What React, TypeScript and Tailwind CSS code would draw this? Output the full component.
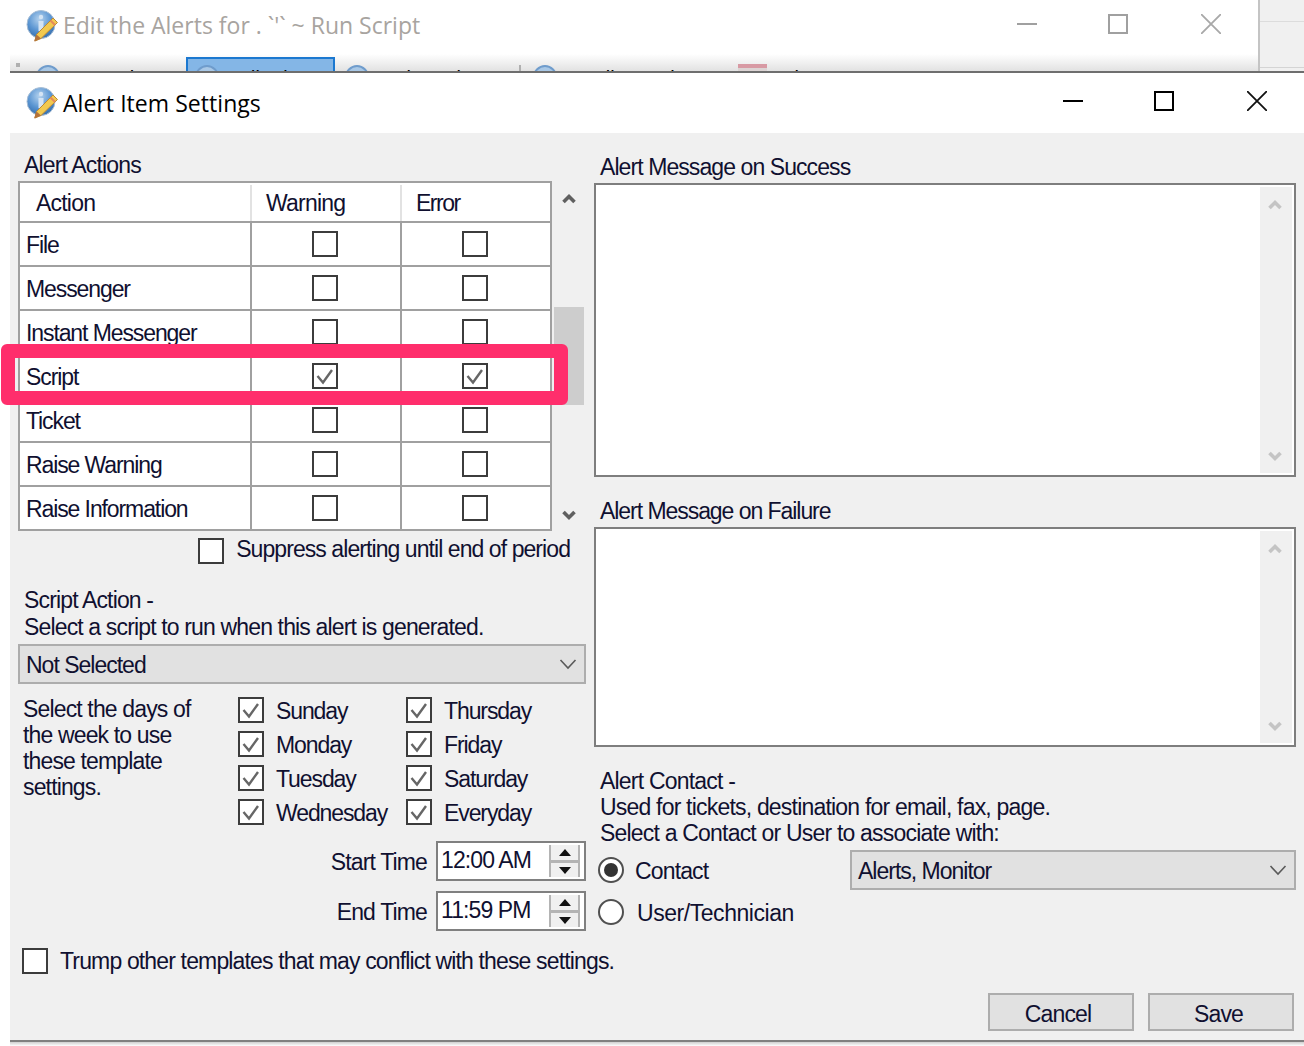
const font = 'font-["Liberation_Sans",Arial,sans-serif]';

function AppIcon() {
  return (
    <svg width="32" height="32" viewBox="0 0 32 32" className="shrink-0">
      <defs>
        <radialGradient id="orb" cx="45%" cy="30%" r="75%">
          <stop offset="0" stopColor="#b4d2ee" />
          <stop offset="0.55" stopColor="#5a95d2" />
          <stop offset="1" stopColor="#2f68a8" />
        </radialGradient>
      </defs>
      <circle cx="15" cy="14.500" r="14" fill="url(#orb)" stroke="#a9bfd6" />
      <circle cx="15" cy="7" r="2.200" fill="#d4e4f4" />
      <path d="M12.500 11h5v10h-5z" fill="#d4e4f4" />
      <path d="M27 8l4.500 4.500L15 28.500l-6 2.500 1.500-6.500z" fill="#f2c94f" stroke="#b9893a" strokeWidth="1" />
      <path d="M10.500 24.500l4.500 4-7 3z" fill="#b5723a" />
      <path d="M24.500 10.500l4.500 4.500" stroke="#e58a5c" strokeWidth="2" />
    </svg>
  );
}

function Chevron({ down = false, light = false }: { down?: boolean; light?: boolean }) {
  return (
    <svg width="14" height="12" viewBox="0 0 14 12" className={light ? 'text-[#c4c4c4]' : 'text-[#606060]'}>
      <path d={down ? 'M1.500 3L7 8.500 12.500 3' : 'M1.500 9L7 3.500 12.500 9'} fill="none" stroke="currentColor" strokeWidth="3.600" />
    </svg>
  );
}

function Check({ checked = false }: { checked?: boolean }) {
  return (
    <span className="flex h-[26px] w-[26px] shrink-0 items-center justify-center border-2 border-[#3c3c3c] bg-white">
      {checked && (
        <svg width="20" height="20" viewBox="0 0 20 20">
          <path d="M2.500 10l5.500 6.500L17 4" fill="none" stroke="#666666" strokeWidth="2.400" />
        </svg>
      )}
    </span>
  );
}

const rows = [
  { name: 'File', h: 'h-[44px]' },
  { name: 'Messenger', h: 'h-[44px]' },
  { name: 'Instant Messenger', h: 'h-[44px]' },
  { name: 'Script', h: 'h-[44px]', checked: true },
  { name: 'Ticket', h: 'h-[44px]' },
  { name: 'Raise Warning', h: 'h-[44px]' },
  { name: 'Raise Information', h: 'h-[42px]' },
];

function ActionsTable() {
  return (
    <div className="relative flex h-[350px] w-[568px]">
      <div className="w-[534px] border-2 border-[#a0a0a0] bg-white text-[23px] tracking-[-1.1px] text-[#101030]">
        <div className="flex h-[40px] border-b-2 border-[#a0a0a0] pt-[2px] tracking-[-0.8px]">
          <div className="flex w-[232px] items-center border-r-2 border-[#e2e2e2] pl-[16px]">Action</div>
          <div className="flex w-[150px] items-center border-r-2 border-[#e2e2e2] pl-[14px]">Warning</div>
          <div className="flex flex-1 items-center pl-[14px] tracking-[-1.5px]">Error</div>
        </div>
        {rows.map((r, i) => (
          <div key={r.name} className={`flex ${r.h} ${i < rows.length - 1 ? 'border-b-2 border-[#a0a0a0]' : ''}`}>
            <div className="flex w-[232px] items-center border-r-2 border-[#a0a0a0] pl-[6px] pt-[2px]">{r.name}</div>
            <div className="flex w-[150px] items-center justify-center border-r-2 border-[#a0a0a0] pr-[2px]">
              <Check checked={r.checked} />
            </div>
            <div className="flex flex-1 items-center justify-center pr-[2px]">
              <Check checked={r.checked} />
            </div>
          </div>
        ))}
      </div>
      <div className="ml-[2px] flex w-[30px] flex-col items-center pb-[10px] pt-[12px]">
        <Chevron />
        <div className="mt-[102px] h-[98px] w-full bg-[#cdcdcd]" />
        <div className="mt-auto flex">
          <Chevron down />
        </div>
      </div>
      <div className="absolute left-[-17px] top-[163px] h-[61px] w-[567px] rounded-[6px] border-[14px] border-[#ff2e6c]" />
    </div>
  );
}

function Spinner() {
  return (
    <div className="flex h-[32px] w-[31px] flex-col items-center justify-center border-x-2 border-[#b4b4b4] bg-[#f0f0f0]">
      <svg width="14" height="9" viewBox="0 0 14 9"><path d="M7 1l6 7H1z" fill="#111" /></svg>
      <div className="my-[3px] h-[3px] w-full bg-[#b4b4b4]" />
      <svg width="14" height="9" viewBox="0 0 14 9"><path d="M7 8L1 1h12z" fill="#111" /></svg>
    </div>
  );
}

function TimeRow({ label, value }: { label: string; value: string }) {
  return (
    <div className="flex h-[40px] items-center justify-end">
      <span className="mr-[9px] pt-[3px]">{label}</span>
      <div className="flex h-[40px] w-[150px] items-center justify-between border-2 border-[#808080] bg-white pl-[3px] pr-[4px]">
        <span className="pb-[2px] tracking-[-0.9px]">{value}</span>
        <Spinner />
      </div>
    </div>
  );
}

function Dropdown({ value, w }: { value: string; w: string }) {
  return (
    <div className={`flex h-[40px] ${w} items-center justify-between border-2 border-[#adadad] bg-[#e1e1e1] pl-[6px] pr-[7px]`}>
      <span className="pt-[2px] tracking-[-1px]">{value}</span>
      <svg width="18" height="12" viewBox="0 0 18 12"><path d="M1.500 2l7.500 8 7.500-8" fill="none" stroke="#5a5a5a" strokeWidth="1.600" /></svg>
    </div>
  );
}

function MessageBox({ h }: { h: string }) {
  return (
    <div className={`flex ${h} justify-end border-2 border-[#7e7e7e] bg-white pb-[2px] pr-[2px] pt-[2px]`}>
      <div className="flex w-[32px] flex-col items-center justify-between bg-[#f0f0f0] pb-[11px] pr-[2px] pt-[12px]">
        <Chevron light />
        <Chevron down light />
      </div>
    </div>
  );
}

function Radio({ on = false }: { on?: boolean }) {
  return (
    <span className="flex h-[26px] w-[26px] items-center justify-center rounded-full border-2 border-[#505050] bg-white">
      {on && <span className="h-[14px] w-[14px] rounded-full bg-[#333333]" />}
    </span>
  );
}

const days = [
  ['Sunday', 'Thursday'],
  ['Monday', 'Friday'],
  ['Tuesday', 'Saturday'],
  ['Wednesday', 'Everyday'],
];

function ToolbarItem({ label, cls, active = false }: { label: string; cls: string; active?: boolean }) {
  return (
    <div className={`flex ${cls} h-[40px] shrink-0 items-start gap-[12px] ${active ? 'mt-[3px] border-x-2 border-t-2 border-[#1b78d0] bg-[#84b6e6] pt-[6px]' : 'pt-[11px]'}`}>
      <span className="h-[24px] w-[24px] shrink-0 rounded-full border-2 border-[#6f9ccc] bg-[#a9c8e6]" />
      <span className="mt-[2px] text-[20px] leading-[23px] text-black">{label}</span>
    </div>
  );
}

export default function App() {
  return (
    <div className={`flex h-[1046px] w-[1304px] flex-col overflow-hidden bg-white ${font}`}>
      {/* window behind the dialog */}
      <div className="flex h-[71px] shrink-0">
        <div className="w-[1258px] shrink-0 pl-[10px]">
          <div className="flex h-[54px] items-center bg-white pb-[3px] pl-[16px]">
            <AppIcon />
            <span className="ml-[5px] font-['Open_Sans',sans-serif] text-[23px] text-[#a8a4a0]">
              Edit the Alerts for . `'` ~ Run Script
            </span>
            <div className="ml-auto flex items-center pb-[3px] pr-[37px]">
              <div className="h-[2px] w-[20px] bg-[#a0a0a0]" />
              <div className="ml-[71px] h-[20px] w-[20px] border-2 border-[#a0a0a0]" />
              <svg className="ml-[73px]" width="20" height="20" viewBox="0 0 20 20"><path d="M0 0l20 20M20 0L0 20" stroke="#a8a8a8" strokeWidth="1.800" /></svg>
            </div>
          </div>
          <div className="flex h-[17px] overflow-hidden bg-gradient-to-b from-white to-[#e2e2e2]">
            <div className="ml-[6px] mt-[9px] h-[4px] w-[4px] shrink-0 bg-[#b0b0b0]" />
            <div className="ml-[10px] flex">
              <ToolbarItem label="New Alert" cls="w-[156px] pl-[6px]" />
              <ToolbarItem label="Edit Alert" cls="w-[149px] pl-[7px]" active />
              <ToolbarItem label="Delete Alert" cls="w-[184px] pl-[10px]" />
              <div className="mt-[11px] h-full w-[2px] shrink-0 bg-[#b0b0b0]" />
              <ToolbarItem label="Duplicate Alert" cls="w-[217px] pl-[12px]" />
              <div className="mt-[10px] h-[20px] w-[29px] shrink-0 border-t-4 border-[#d89aa4] bg-[#dcd4d4]" />
              <span className="ml-[13px] mt-[13px] text-[20px] leading-[23px] text-black">Close</span>
            </div>
          </div>
        </div>
        <div className="flex-1 border-l-2 border-[#c4c4c4] bg-[#f0f0f0]">
          <div className="mt-[21px] h-[1px] bg-[#dcdcdc]" />
          <div className="mt-[45px] h-[1px] bg-[#d4d4d4]" />
        </div>
      </div>

      {/* dialog */}
      <div className="ml-[10px] flex h-[975px] shrink-0 flex-col border-t-2 border-[#6e6e6e]">
        <div className="flex h-[60px] shrink-0 items-center bg-white pl-[16px]">
          <AppIcon />
          <span className="ml-[5px] font-['Open_Sans',sans-serif] text-[23px] tracking-[0.05px] text-black">Alert Item Settings</span>
          <div className="ml-auto mb-[4px] flex items-center pr-[37px]">
            <div className="h-[2px] w-[20px] bg-black" />
            <div className="ml-[71px] h-[20px] w-[20px] border-2 border-black" />
            <svg className="ml-[73px]" width="20" height="20" viewBox="0 0 20 20"><path d="M0 0l20 20M20 0L0 20" stroke="#111" strokeWidth="1.800" /></svg>
          </div>
        </div>

        <div className="flex h-[909px] shrink-0 flex-col border-b-2 border-[#808080] bg-[#f0f0f0] pl-[8px] pr-[8px] text-[23px] tracking-[-0.85px] text-[#101030]">
          <div className="flex h-[798px] shrink-0 gap-[8px]">
            {/* left column */}
            <div className="w-[568px] shrink-0">
              <div className="flex h-[48px] items-end pb-[3px] pl-[6px] leading-[26px]">Alert Actions</div>
              <ActionsTable />
              <div className="flex h-[40px] items-center justify-end pr-[16px]">
                <Check />
                <span className="ml-[12px] pb-[3px] tracking-[-0.93px]">Suppress alerting until end of period</span>
              </div>
              <div className="pl-[6px] pt-[16px] leading-[27px]">
                <div>Script Action -</div>
                <div>Select a script to run when this alert is generated.</div>
              </div>
              <div className="mt-[3px]">
                <Dropdown value="Not Selected" w="w-[568px]" />
              </div>
              <div className="mt-[13px] flex">
                <div className="-mt-[1px] w-[220px] pl-[5px] leading-[26px]">
                  Select the days of<br />the week to use<br />these template<br />settings.
                </div>
                <div className="grid grid-cols-[168px_auto] gap-y-[8px] tracking-[-1.1px]">
                  {days.flat().map(d => (
                    <div key={d} className="flex h-[26px] items-center gap-[12px]">
                      <Check checked />
                      <span className="pt-[2px]">{d}</span>
                    </div>
                  ))}
                </div>
              </div>
              <div className="mt-[16px] flex flex-col gap-[10px]">
                <TimeRow label="Start Time" value="12:00 AM" />
                <TimeRow label="End Time" value="11:59 PM" />
              </div>
            </div>

            {/* right column */}
            <div className="flex-1">
              <div className="flex h-[50px] items-end pb-[3px] pl-[6px] leading-[26px] tracking-[-0.92px]">Alert Message on Success</div>
              <MessageBox h="h-[294px]" />
              <div className="flex h-[50px] items-end pb-[3px] pl-[6px] leading-[26px] tracking-[-1.05px]">Alert Message on Failure</div>
              <MessageBox h="h-[220px]" />
              <div className="pl-[6px] pt-[21px] leading-[26px] tracking-[-0.8px]">
                <div>Alert Contact -</div>
                <div>Used for tickets, destination for email, fax, page.</div>
                <div>Select a Contact or User to associate with:</div>
              </div>
              <div className="mt-[4px] flex h-[40px] items-center pl-[4px]">
                <Radio on />
                <span className="ml-[11px] w-[215px] pt-[2px]">Contact</span>
                <Dropdown value="Alerts, Monitor" w="w-[446px]" />
              </div>
              <div className="mt-[9px] flex h-[26px] items-center pl-[4px]">
                <Radio />
                <span className="ml-[13px] pt-[2px] tracking-[-0.45px]">User/Technician</span>
              </div>
            </div>
          </div>

          <div className="mt-[17px] flex h-[26px] shrink-0 items-center pl-[4px]">
            <Check />
            <span className="ml-[12px]">Trump other templates that may conflict with these settings.</span>
          </div>
          <div className="mt-[19px] flex justify-end gap-[14px] pr-[2px]">
            <button className="h-[38px] w-[146px] border-2 border-[#adadad] bg-[#e1e1e1] pr-[6px] pt-[2px]">Cancel</button>
            <button className="h-[38px] w-[146px] border-2 border-[#adadad] bg-[#e1e1e1] pr-[5px] pt-[2px]">Save</button>
          </div>
        </div>
        <div className="h-[4px] shrink-0 bg-gradient-to-b from-[#cfcfcf] to-white" />
      </div>
    </div>
  );
}
